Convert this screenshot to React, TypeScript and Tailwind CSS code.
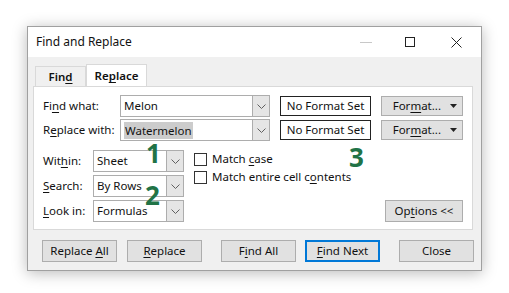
const font = { fontFamily: '"Noto Sans", "Open Sans", sans-serif' }

const U = ({ children }: { children: string }) => <span className="underline underline-offset-2">{children}</span>

const Chevron = () => (
    <svg width="9" height="5" viewBox="0 0 9 5">
        <polyline points="0.5,0.5 4.5,4.5 8.5,0.5" fill="none" stroke="#606060" strokeWidth="1" />
    </svg>
)

const Combo = ({ w, children }: { w: string; children: React.ReactNode }) => (
    <div className={`flex h-[22px] shrink-0 ${w} border border-[#adadad] bg-white`}>
        <div className="flex flex-1 items-center pl-[3px]">{children}</div>
        <div className="flex w-[17px] items-center justify-center border-l border-[#adadad] bg-[#e5e5e5]">
            <Chevron />
        </div>
    </div>
)

const Btn = ({ children, blue }: { children: React.ReactNode; blue?: boolean }) => (
    <div
        className={`flex h-[22px] w-[75px] shrink-0 items-center justify-center bg-[#e1e1e1] ${
            blue ? 'border-2 border-[#0078d7]' : 'border border-[#adadad]'
        }`}
    >
        {children}
    </div>
)

const FormatBtn = () => (
    <div className="flex h-[20px] w-[82px] items-center justify-end gap-[9px] border border-[#adadad] bg-[#e1e1e1] pr-[5px]">
        <span>
            For<U>m</U>at...
        </span>
        <svg width="7" height="4" viewBox="0 0 7 4">
            <polygon points="0,0 7,0 3.5,4" fill="#222" />
        </svg>
    </div>
)

const NoFormat = () => (
    <div className="flex h-[20px] w-[91px] items-center justify-center border border-[#222] bg-white">No Format Set</div>
)

const Check = ({ children }: { children: React.ReactNode }) => (
    <div className="flex h-[18px] items-center gap-[5px]">
        <div className="h-[13px] w-[13px] border border-[#333] bg-white" />
        <span>{children}</span>
    </div>
)

const Num = ({ n, cls }: { n: string; cls: string }) => (
    <div className={`absolute text-[26px] leading-none font-bold text-[#217346] ${cls}`}>{n}</div>
)

export default function App() {
    return (
        <div className="h-[293px] w-[509px] bg-white pt-[26px] pl-[27px] text-[11.5px] text-[#111]" style={font}>
            <div className="flex h-[245px] w-[455px] flex-col border border-[#a0a0a0] shadow-[0_2px_14px_rgba(0,0,0,0.28)]">
                <div className="flex h-[30px] items-center bg-white pl-[8px] text-[12px]">
                    <span className="flex-1">Find and Replace</span>
                    <div className="mr-[33px] h-px w-[12px] bg-[#c8c8c8]" />
                    <div className="mr-[36px] h-[10px] w-[10px] border border-[#222]" />
                    <svg width="11" height="11" viewBox="0 0 11 11" className="mr-[19px]">
                        <path d="M0.5 0.5 L10.5 10.5 M10.5 0.5 L0.5 10.5" stroke="#222" strokeWidth="1" />
                    </svg>
                </div>
                <div className="flex flex-1 flex-col bg-[#f0f0f0]">
                    <div className="mt-[7px] ml-[7px] flex h-[22px] items-end">
                        <div className="flex h-[20px] w-[51px] items-center justify-center border border-b-0 border-[#d9d9d9] font-semibold">
                            <span>
                                Fin<U>d</U>
                            </span>
                        </div>
                        <div className="relative top-px flex h-[23px] w-[61px] items-center justify-center border border-b-0 border-[#d9d9d9] bg-white font-semibold">
                            <span>
                                Re<U>p</U>lace
                            </span>
                        </div>
                    </div>
                    <div className="relative ml-[5px] flex h-[144px] w-[440px] flex-col border border-[#d9d9d9] bg-white px-[9px] pt-[8px]">
                        <div className="flex items-center">
                            <span className="w-[78px]">
                                Fi<U>n</U>d what:
                            </span>
                            <Combo w="w-[150px]">Melon</Combo>
                            <div className="ml-[10px]">
                                <NoFormat />
                            </div>
                            <div className="ml-[10px]">
                                <FormatBtn />
                            </div>
                        </div>
                        <div className="mt-[2px] flex items-center">
                            <span className="w-[78px]">
                                R<U>e</U>place with:
                            </span>
                            <Combo w="w-[150px]">
                                <span className="bg-[#cccccc] px-[1px] leading-[17px]">Watermelon</span>
                            </Combo>
                            <div className="ml-[10px]">
                                <NoFormat />
                            </div>
                            <div className="ml-[10px]">
                                <FormatBtn />
                            </div>
                        </div>
                        <div className="mt-[9px] flex">
                            <div className="flex flex-col gap-[3px]">
                                <div className="flex items-center">
                                    <span className="w-[50px]">
                                        Wit<U>h</U>in:
                                    </span>
                                    <Combo w="w-[91px]">Sheet</Combo>
                                </div>
                                <div className="flex items-center">
                                    <span className="w-[50px]">
                                        <U>S</U>earch:
                                    </span>
                                    <Combo w="w-[91px]">By Rows</Combo>
                                </div>
                                <div className="flex items-center">
                                    <span className="w-[50px]">
                                        <U>L</U>ook in:
                                    </span>
                                    <Combo w="w-[91px]">Formulas</Combo>
                                </div>
                            </div>
                            <div className="ml-[10px] flex flex-col">
                                <Check>
                                    Match <U>c</U>ase
                                </Check>
                                <Check>
                                    Match entire cell c<U>o</U>ntents
                                </Check>
                            </div>
                            <div className="flex flex-1 flex-col items-end justify-end">
                                <div className="flex h-[22px] w-[78px] items-center justify-center border border-[#adadad] bg-[#e1e1e1]">
                                    <span>
                                        Op<U>t</U>ions &lt;&lt;
                                    </span>
                                </div>
                            </div>
                        </div>
                        <Num n="1" cls="top-[53px] left-[112px]" />
                        <Num n="2" cls="top-[95px] left-[111px]" />
                        <Num n="3" cls="top-[57px] left-[315px]" />
                    </div>
                    <div className="mt-[10px] flex pl-[14px]">
                        <Btn>
                            <span>
                                Replace <U>A</U>ll
                            </span>
                        </Btn>
                        <div className="ml-[10px]">
                            <Btn>
                                <span>
                                    <U>R</U>eplace
                                </span>
                            </Btn>
                        </div>
                        <div className="ml-[19px]">
                            <Btn>
                                <span>
                                    F<U>i</U>nd All
                                </span>
                            </Btn>
                        </div>
                        <div className="ml-[9px]">
                            <Btn blue>
                                <span>
                                    <U>F</U>ind Next
                                </span>
                            </Btn>
                        </div>
                        <div className="ml-[19px]">
                            <Btn>Close</Btn>
                        </div>
                    </div>
                </div>
            </div>
        </div>
    )
}
